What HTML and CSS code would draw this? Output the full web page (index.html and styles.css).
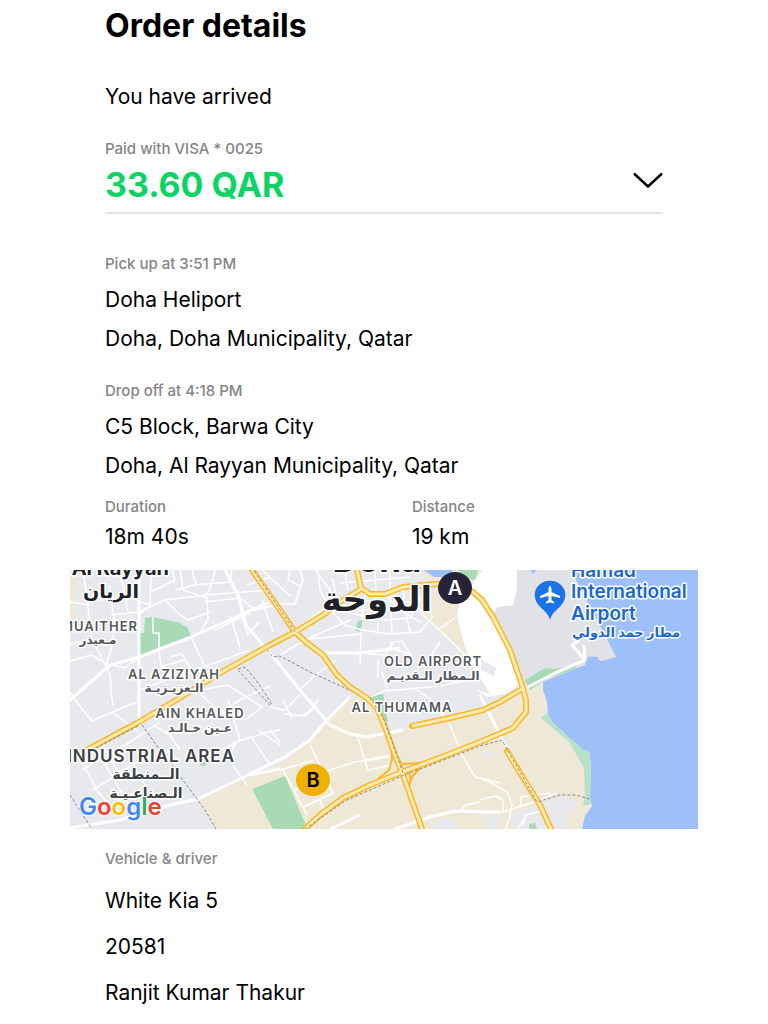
FILE: index.html
```html
<!DOCTYPE html>
<html lang="en">
<head>
    <meta charset="UTF-8">
    <meta name="viewport" content="width=device-width, initial-scale=1.0">
    <title>Order details</title>
    <link rel="stylesheet" href="styles.css">
</head>
<body>
    <main class="order">
        <h1 class="title">Order details</h1>
        <p class="status">You have arrived</p>

        <section class="payment">
            <div>
                <h2 class="label">Paid with VISA * 0025</h2>
                <p class="price">33.60 QAR</p>
            </div>
            <button class="toggle" type="button" aria-label="Show price details">
                <svg width="30" height="17" viewBox="0 0 30 17"><path d="M1 1.500 L15 14.500 L29 1.500" fill="none" stroke="#000" stroke-width="2.500"/></svg>
            </button>
        </section>

        <section class="stop">
            <h2 class="label">Pick up at 3:51 PM</h2>
            <p>Doha Heliport</p>
            <p>Doha, Doha Municipality, Qatar</p>
        </section>

        <section class="stop">
            <h2 class="label">Drop off at 4:18 PM</h2>
            <p>C5 Block, Barwa City</p>
            <p>Doha, Al Rayyan Municipality, Qatar</p>
        </section>

        <section class="stats">
            <div>
                <h2 class="label">Duration</h2>
                <p>18m 40s</p>
            </div>
            <div>
                <h2 class="label">Distance</h2>
                <p>19 km</p>
            </div>
        </section>

        <svg class="map" viewBox="70 570 628 259" role="img" aria-label="Route map">
            <rect class="land" x="70" y="570" width="628" height="259"/>

            <!-- sand -->
            <path class="sand" d="M70 570H78L76 600L75 620L70 622Z"/>
            <path class="sand" d="M198 799L252 775L280 764L293 753L310 740L325 722L350 697L367 698L377 708L385 733L403 730L450 718L490 707L520 688L543 682V829H217Z"/>
            <path class="sand" d="M367 698L350 697L325 722L350 733L367 737L386 733Z"/>
            <path class="sand" d="M415 570H484L470 590L500 700L480 678L450 640L420 612L437 586Z"/>
            <path class="sand" d="M530 684L543 682L543 691L548 712L590 751V806L582 829H530Z"/>

            <!-- open ground and the airport -->
            <path class="open" d="M483 570H517V590L513 605L520 683L508 693L487 697L476 690L490 694L470 660L463 640L457 617L459 603L470 587Z"/>
            <path class="airport" d="M517 570H575L590 607L616 657L600 661L597 657L588 656L585 665L543 682L524 686L493 615L497 607L513 605L517 590Z"/>
            <path class="land" d="M481 659L496 668L494 676L481 670Z"/>
            <path class="land" d="M402 740L413 734L411 739ZM481 753L500 752L488 758ZM433 829L437 820L450 818L460 829ZM486 815L500 817L497 829H485ZM509 816L532 806L566 796L577 803L573 811L566 811L567 829H518Z"/>

            <!-- water -->
            <path class="sea" d="M571 570H698V829H582L585 816L592 806L590 797L591 768L589 751L583 750L553 723L548 715L547 702L543 690V682L577 668L585 665L587 656L599 657L601 661L616 657L590 607Z"/>
            <path class="sea" d="M423 570H453L448 577L434 577ZM530 570H537L533 574Z"/>
            <path class="airport" d="M571 570L590 607L616 657L600 661L597 656L586 657L584 650L568 570Z"/>

            <!-- parks -->
            <path class="park" d="M139 633H144L145 618L153 617L180 623L188 628L191 637L139 657Z"/>
            <path class="park" d="M252 789L285 776L306 825L303 829H273Z"/>
            <path class="park" d="M370 695L383 694L388 723L381 718Z"/>
            <path class="park" d="M358 621L363 620L360 632L355 630ZM458 570H478L475 580L465 578ZM372 695L383 694L384 700H371ZM200 762L208 761L205 766L200 765Z"/>
            <path class="park" d="M525 680L545 668L555 669L577 665L575 669L548 678L530 690ZM529 824L535 823L537 829H529Z"/>
            <path class="coast" d="M547 712L541 718L569 742L584 768L585 795L583 806L591 804L590 797L591 768L589 751L583 750L553 723Z"/>

            <!-- city streets -->
            <g class="street">
                <path d="M83 570L87 600L92 640L104 662L110 675"/>
                <path d="M109 585L115 625L111 650L106 664"/>
                <path d="M139 615L150 605L151 577L158 570M151 592L175 580L172 570"/>
                <path d="M70 661L92 655L106 664L125 668L139 657"/>
                <path d="M110 675L112 700L113 706M139 690L190 672L250 650"/>
                <path d="M70 692L82 709L92 721L112 712L137 702M112 712L139 732"/>
                <path d="M118 570L124 590L128 612M100 600L128 597L150 605"/>
                <path d="M139 612L165 600L207 595L270 590M165 600L180 615L188 620L210 612"/>
                <path d="M180 570L183 590L207 598L208 620L200 632"/>
                <path d="M175 590L195 585L230 582L232 570M192 570L196 585M215 570L212 583L207 595"/>
                <path d="M153 617V633H159V650L161 665L170 675M191 637L204 665L218 672"/>
                <path d="M170 657L182 654L197 680M160 667L184 660"/>
                <path d="M204 602L240 598L255 610L280 604M215 630L250 613M247 585L270 577"/>
                <path d="M230 615L240 647M240 612L248 635L259 622M262 600L273 632"/>
                <path d="M70 602L90 605M92 640L70 644M111 615L139 612"/>
                <path d="M80 758L97 790L110 806M96 748L120 790L133 812M82 770L130 742L160 722"/>
                <path d="M93 790L140 760L172 750M108 807L140 790M130 760L150 793L158 805"/>
                <path d="M153 725L170 735L180 750M100 740L117 770"/>
                <path d="M160 695L200 690L228 685L262 707M196 690L220 712L245 720L262 707"/>
                <path d="M221 712L240 700L270 686M236 742L228 758L247 785M236 742L265 733L280 730"/>
                <path d="M252 738L270 765M258 730L280 745M228 700L240 740L222 750"/>
                <path d="M280 604L295 604L303 580L300 570M262 570L290 596M290 570L288 580L300 586"/>
                <path d="M280 655L305 640L350 620M300 627L335 600M315 570L330 590L335 605"/>
                <path d="M318 570L320 590L330 610L345 625L362 630L390 634L420 632L432 618L430 602"/>
                <path d="M332 578L337 597L350 613L385 620L410 618L420 600L415 585"/>
                <path d="M345 570L348 590M340 583L375 580L410 577M375 570L376 594L378 632M390 570L390 595L392 634M403 587L405 610L410 632"/>
                <path d="M350 600L410 602M348 610L425 610M385 594L400 610L420 622M365 594L362 620"/>
                <path d="M361 632L360 665M361 653L385 655M390 643L402 641L412 657M385 655L393 643M395 650L408 653"/>
                <path d="M420 612L450 640L472 662L485 680M438 630L455 618M440 642L430 657M300 640L360 634"/>
                <path d="M368 698L385 691L440 686L480 678M388 691L382 672M378 678V660"/>
                <path d="M417 690L430 699L450 725L462 755L475 777L500 783"/>
                <path d="M300 695L285 710L270 707M300 690L315 675L337 660M318 700L306 716L285 714"/>
                <path d="M270 730L280 742M283 700L292 718M313 710L300 716"/>
                <path d="M358 738L368 770L392 765L391 755L365 760M280 770L315 760M295 790L330 770L355 762L390 757"/>
                <path d="M282 768L307 815M310 745L333 793M294 790L332 778M303 807L334 793M320 800L326 817"/>
                <path d="M480 778L495 785L507 792L512 805L509 820L505 829M480 800L495 796L503 800V812L480 813M503 812L540 800L556 793M521 807V797L550 793M518 829L526 815L545 810M525 816L523 825"/>
                <path d="M461 811L465 805L480 802"/>
            </g>

            <!-- main streets -->
            <g class="avenue">
                <path d="M139 570V725"/>
                <path d="M70 700L110 665L139 657L191 637L270 602"/>
                <path d="M225 570L238 595L246 625L263 645L280 665L300 690L330 725L350 734L367 737L403 730"/>
                <path d="M70 828L120 820L170 805L198 799L252 773L285 757L310 740L325 722L350 697"/>
                <path d="M330 829L360 815M395 829L430 817L455 811L500 812"/>
                <path d="M480 695L495 725L508 751"/>
                <path d="M528 687L555 673L585 660L584 645M585 660L572 645L578 641"/>
                <path d="M320 653L360 653L400 648M250 775L280 769"/>
            </g>

            <g class="rail">
                <path d="M267 650L273 657L280 656L310 672L345 688L365 698M238 669L245 667L256 680L268 698L272 705M238 670L250 683L270 705"/>
                <path d="M142 725L160 750L183 780L205 810L216 829M70 795L92 829"/>
            </g>

            <!-- highways: casing first, then the fill -->
            <g class="casing">
                <path id="h1" d="M252 570L280 610L295 632L307 643L323 655L337 675L350 687L367 698L377 708L385 727L395 755L402 772L420 823L422 829"/>
                <path id="h2" d="M70 761L87 750L137 723L173 702L220 673L270 645L295 632L323 615L340 602L361 589"/>
                <path id="h3" d="M357 570L361 588L370 594L385 594L403 587L437 584L460 584L473 592L482 600L493 617L510 650L522 685L526 700V712L513 728L480 742L447 755L402 772L370 785L343 798L320 815L305 829"/>
                <path id="h4" d="M412 726L450 718L483 710L500 702L522 689"/>
                <path id="h5" d="M507 751L517 768L540 805L551 829"/>
            </g>
            <g class="ramp">
                <path d="M391 745L392 760L389 770L378 779M394 752L402 764L422 763M411 782L409 770L422 763M408 790L412 777L423 764M518 765L521 772L528 785"/>
            </g>
            <g class="highway">
                <path d="M252 570L280 610L295 632L307 643L323 655L337 675L350 687L367 698L377 708L385 727L395 755L402 772L420 823L422 829"/>
                <path d="M70 761L87 750L137 723L173 702L220 673L270 645L295 632L323 615L340 602L361 589"/>
                <path d="M357 570L361 588L370 594L385 594L403 587L437 584L460 584L473 592L482 600L493 617L510 650L522 685L526 700V712L513 728L480 742L447 755L402 772L370 785L343 798L320 815L305 829"/>
                <path d="M412 726L450 718L483 710L500 702L522 689"/>
                <path d="M507 751L517 768L540 805L551 829"/>
            </g>
            <g class="rail">
                <path d="M254 571L295 632M370 697L384 720L403 773M138 726L92 750M305 829L345 801L402 776L480 746L502 740L508 751L537 802L560 795L575 795L590 799"/>
            </g>

            <!-- place names -->
            <g class="place city">
                <text x="169" y="575" text-anchor="end" font-size="20">Al Rayyan</text>
                <text x="111" y="598" text-anchor="middle" font-size="19">الريان</text>
                <text x="377" y="572" text-anchor="middle" font-size="35">Doha</text>
                <text x="377" y="611" text-anchor="middle" font-size="34">الدوحة</text>
            </g>
            <g class="place area">
                <text x="138" y="631" text-anchor="end">MUAITHER</text>
                <text class="arabic" x="98" y="644" text-anchor="middle">مـعيذر</text>
                <text x="174" y="679" text-anchor="middle">AL AZIZIYAH</text>
                <text class="arabic" x="174" y="692" text-anchor="middle">الـعزيـزيـة</text>
                <text x="200" y="718" text-anchor="middle">AIN KHALED</text>
                <text class="arabic" x="200" y="732" text-anchor="middle">عـين خـالـد</text>
                <text x="433" y="666" text-anchor="middle">OLD AIRPORT</text>
                <text class="arabic" x="433" y="680" text-anchor="middle">الـمطار الـقديـم</text>
                <text x="402" y="712" text-anchor="middle">AL THUMAMA</text>
            </g>
            <g class="place district">
                <text x="235" y="762" text-anchor="end" font-size="17">INDUSTRIAL AREA</text>
                <text x="146" y="779" text-anchor="middle" font-size="14">الــمنطقة</text>
                <text x="146" y="798" text-anchor="middle" font-size="14">الـصناعـيـة</text>
            </g>
            <g class="place poi">
                <text x="571" y="577">Hamad</text>
                <text x="571" y="598">International</text>
                <text x="571" y="620">Airport</text>
                <text x="626" y="637" text-anchor="middle" font-size="13">مطار حمد الدولي</text>
            </g>

            <!-- airport pin -->
            <path d="M550 619C548 610 535 607 535 594.500A15 13.500 0 0 1 565 594.500C565 607 552 610 550 619Z" fill="#1a73e8" stroke="#1459c0" stroke-width="0.500"/>
            <path d="M550 586C551 586 551.500 588 551.500 590V592L560 596V598L551.500 596V600L554 602V603.500L550 602.500L546 603.500V602L548.500 600V596L540 598V596L548.500 592V590C548.500 588 549 586 550 586Z" fill="#fff"/>

            <g class="marker">
                <ellipse cx="455" cy="588" rx="17" ry="16" fill="#25233a"/>
                <text x="455" y="595" fill="#fff">A</text>
                <ellipse cx="313" cy="780" rx="17" ry="16" fill="#f0b000"/>
                <text x="313" y="787" fill="#000">B</text>
            </g>

            <text class="brand" x="79" y="815"><tspan fill="#4285f4">G</tspan><tspan fill="#ea4335">o</tspan><tspan fill="#fbbc05">o</tspan><tspan fill="#4285f4">g</tspan><tspan fill="#34a853">l</tspan><tspan fill="#ea4335">e</tspan></text>
        </svg>

        <section class="vehicle">
            <h2 class="label">Vehicle &amp; driver</h2>
            <p>White Kia 5</p>
            <p>20581</p>
            <p>Ranjit Kumar Thakur</p>
        </section>
    </main>
</body>
</html>
```
FILE: styles.css
```css
* {
    box-sizing: border-box;
}

body {
    margin: 0;
    background-color: #fff;
    color: #000;
    font-family: Inter, "Liberation Sans", sans-serif;
    font-size: 21px;
    line-height: 28px;
}

h1,
h2,
p {
    margin: 0;
}

.order {
    padding: 6px 105px 0;
}

.title {
    font-size: 32px;
    line-height: 40px;
    font-weight: 700;
}

.status {
    margin-top: 37px;
}

.label {
    margin-bottom: 6px;
    color: #858585;
    font-size: 15px;
    line-height: 20px;
    font-weight: 500;
}

.payment {
    display: flex;
    justify-content: space-between;
    align-items: center;
    margin-top: 28px;
    padding-bottom: 7px;
    border-bottom: 2px solid #e4e4e4;
}

.price {
    color: #0bd464;
    font-size: 34px;
    line-height: 40px;
    font-weight: 700;
}

.toggle {
    display: flex;
    padding: 16px 0 0;
    border: 0;
    background: none;
    cursor: pointer;
}

.stop {
    margin-top: 23px;
    line-height: 39px;
}

.payment + .stop {
    margin-top: 40px;
}

.stats {
    display: grid;
    grid-template-columns: 55% 45%;
    margin-top: 12px;
}

.map {
    display: block;
    width: calc(100% + 70px);
    margin: 19px -35px 0;
}

.vehicle {
    margin-top: 20px;
    padding-bottom: 8px;
    line-height: 46px;
}

.vehicle .label {
    margin-bottom: 9px;
}

/* map */
.land {
    fill: #e8e9ed;
}

.sand {
    fill: #efe8d7;
}

.open {
    fill: #fff;
}

.airport {
    fill: #e1e2e6;
}

.sea {
    fill: #9dbffa;
}

.park {
    fill: #a8dab5;
}

.coast {
    fill: #b8e2c8;
}

.street,
.avenue,
.casing,
.highway,
.ramp,
.rail {
    fill: none;
    stroke-linejoin: round;
}

.street {
    stroke: #fff;
    stroke-width: 1.5px;
}

.avenue {
    stroke: #fff;
    stroke-width: 3px;
}

.casing {
    stroke: #f9b62b;
    stroke-width: 6px;
    stroke-linecap: round;
}

.highway {
    stroke: #fdebb0;
    stroke-width: 3px;
}

.ramp {
    stroke: #f9b62b;
    stroke-width: 2px;
}

.rail {
    stroke: #85888c;
    stroke-width: 1px;
    stroke-dasharray: 3 2;
}

.place {
    font-family: Inter, "DejaVu Sans", sans-serif;
    paint-order: stroke;
    stroke: #fff;
    stroke-width: 3px;
    stroke-linejoin: round;
}

.city {
    fill: #202124;
    font-weight: 700;
}

.area {
    fill: #55585d;
    font-size: 13px;
    font-weight: 600;
    letter-spacing: 1px;
}

.area .arabic {
    font-size: 12px;
}

.district {
    fill: #3c4043;
    font-weight: 600;
    letter-spacing: 1px;
}

.poi {
    fill: #1967d2;
    font-size: 19px;
    font-weight: 600;
}

.marker {
    font-size: 20px;
    font-weight: 600;
    text-anchor: middle;
}

.brand {
    font-size: 24px;
    font-weight: 600;
    paint-order: stroke;
    stroke: #fff;
    stroke-width: 2px;
}
```
